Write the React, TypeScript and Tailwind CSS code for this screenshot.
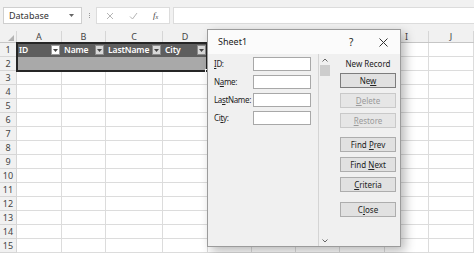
import React from "react";

const cols = [
  { name: "A", w: "w-[45px]" },
  { name: "B", w: "w-[44px]" },
  { name: "C", w: "w-[57px]" },
  { name: "D", w: "w-[45px]" },
  { name: "", w: "w-[44px]" },
  { name: "", w: "w-[44px]" },
  { name: "", w: "w-[44px]" },
  { name: "", w: "w-[45px]" },
  { name: "I", w: "w-[44px]" },
  { name: "J", w: "w-[45px]" },
];

const headers = ["ID", "Name", "LastName", "City"];

const FilterBtn = ({ active }: { active?: boolean }) => (
  <span
    className={`flex shrink-0 items-center justify-center w-[9px] h-[10px] border ${
      active ? "bg-white border-[#9a9a9a]" : "bg-[#d9d9d9] border-[#8c8c8c]"
    }`}
  >
    <svg width="5" height="3" viewBox="0 0 5 3">
      <path d="M0 0h5L2.5 3z" fill="#444" />
    </svg>
  </span>
);

// label with one underlined letter (access key)
const Key = ({ pre, k, post }: { pre: string; k: string; post: string }) => (
  <span className="whitespace-pre">
    {pre}
    <span className="underline underline-offset-1">{k}</span>
    {post}
  </span>
);

const DlgButton = ({
  children,
  disabled,
  main,
}: {
  children: React.ReactNode;
  disabled?: boolean;
  main?: boolean;
}) => (
  <div
    className={`flex items-center justify-center h-[15px] w-[56px] border text-[8px] ${
      disabled
        ? "bg-[#e6e6e6] border-[#c9c9c9] text-[#9a9a9a]"
        : main
        ? "bg-[#e1e1e1] border-[#7d7d7d] text-[#222]"
        : "bg-[#e1e1e1] border-[#adadad] text-[#222]"
    }`}
  >
    {children}
  </div>
);

const Field = ({ label }: { label: React.ReactNode }) => (
  <div className="flex items-center h-[14px]">
    <span className="w-[39px] shrink-0 whitespace-nowrap text-[8px] tracking-[-0.35px] text-[#222]">{label}</span>
    <div className="w-[58px] h-[14px] bg-white border border-[#a8a8a8]" />
  </div>
);

export default function App() {
  return (
    <div className="relative w-[474px] h-[253px] overflow-hidden bg-white font-['Noto_Sans',sans-serif] select-none">
      {/* name box + formula bar */}
      <div className="flex items-start h-[31px] bg-[#f1f1f1] pt-[7px] pl-[3px]">
        <div className="flex items-center justify-between w-[79px] h-[17px] bg-white border border-[#cfcfcf] pl-[5px] pr-[7px] text-[9px] text-[#333]">
          <span>Database</span>
          <svg width="5" height="3" viewBox="0 0 5 3">
            <path d="M0 0h5L2.5 3z" fill="#666" />
          </svg>
        </div>
        <div className="flex flex-col items-center justify-center gap-[1px] w-[14px] h-[17px]">
          <span className="w-[1px] h-[1px] bg-[#999]" />
          <span className="w-[1px] h-[1px] bg-[#999]" />
          <span className="w-[1px] h-[1px] bg-[#999]" />
        </div>
        <div className="flex items-center w-[74px] h-[17px] bg-white border border-[#dcdcdc] pl-[8px]">
          <svg width="8" height="8" viewBox="0 0 8 8" className="ml-[1px]">
            <path d="M1 1l6 6M7 1L1 7" stroke="#b5b5b5" strokeWidth="1" />
          </svg>
          <svg width="9" height="8" viewBox="0 0 9 8" className="ml-[15px]">
            <path d="M1 4.5l2.5 2.5L8 1" stroke="#b5b5b5" strokeWidth="1" fill="none" />
          </svg>
          <span className="ml-[15px] text-[9px] italic font-['Liberation_Serif',serif] text-[#444]">
            f<sub className="text-[6px]">x</sub>
          </span>
        </div>
        <div className="flex-1 h-[17px] ml-[3px] bg-white border-y border-l border-[#dcdcdc]" />
      </div>

      {/* sheet grid */}
      <div className="flex flex-col">
        <div className="flex h-[12px] bg-[#f1f1f1] border-b border-[#c6c6c6]">
          <div className="relative w-[17px] border-r border-[#d6d6d6]">
            <svg width="6" height="6" viewBox="0 0 6 6" className="absolute right-[2px] bottom-[1px]">
              <path d="M6 0v6H0z" fill="#b3b3b3" />
            </svg>
          </div>
          {cols.map((c, ci) => (
            <div
              key={ci}
              className={`${c.w} shrink-0 flex items-center justify-center border-r border-[#d6d6d6] text-[9px] text-[#444]`}
            >
              {c.name}
            </div>
          ))}
        </div>
        {Array.from({ length: 15 }, (_, i) => i + 1).map((r) => (
          <div key={r} className="flex h-[14px]">
            <div className="w-[17px] shrink-0 flex items-center justify-center bg-[#f1f1f1] border-r border-b border-[#d6d6d6] text-[9px] text-[#444]">
              {r}
            </div>
            {cols.map((c, ci) => {
              if (r === 1 && ci < 4)
                return (
                  <div
                    key={ci}
                    className={`${c.w} shrink-0 flex items-center justify-between bg-[#5e5e5e] pl-[2px] pr-[2px] text-[8.5px] font-semibold text-white overflow-hidden`}
                  >
                    <span className="whitespace-nowrap tracking-[-0.1px]">{headers[ci]}</span>
                    <FilterBtn active={ci === 0} />
                  </div>
                );
              if (r === 2 && ci < 4)
                return <div key={ci} className={`${c.w} shrink-0 bg-[#a9a9a9]`} />;
              return (
                <div
                  key={ci}
                  className={`${c.w} shrink-0 border-r border-b border-[#dcdcdc]`}
                />
              );
            })}
          </div>
        ))}
      </div>

      {/* selection outline */}
      <div className="absolute left-[16px] top-[42px] w-[192px] h-[30px] border-2 border-[#262626]" />
      <div className="absolute left-[205px] top-[69px] w-[4px] h-[4px] bg-[#262626] border border-white" />

      {/* data form dialog */}
      <div className="absolute left-[207px] top-[29px] w-[194px] h-[218px] flex flex-col bg-[#f0f0f0] border border-[#9b9b9b] shadow-[4px_4px_10px_rgba(0,0,0,0.28)]">
        <div className="flex items-center h-[24px] bg-[#fbfbfb] pl-[10px] text-[9px] text-[#222]">
          <span className="flex-1">Sheet1</span>
          <span className="w-[30px] text-[10px]">?</span>
          <svg width="9" height="9" viewBox="0 0 9 9" className="mr-[12px]">
            <path d="M0.5 0.5l8 8M8.5 0.5l-8 8" stroke="#333" strokeWidth="1" />
          </svg>
        </div>
        <div className="flex flex-1">
          <div className="flex flex-col gap-[4px] w-[110px] pl-[6px] pt-[3px]">
            <Field label={<Key pre="" k="I" post="D:" />} />
            <Field label={<Key pre="N" k="a" post="me:" />} />
            <Field label={<Key pre="La" k="s" post="tName:" />} />
            <Field label={<Key pre="Ci" k="t" post="y:" />} />
          </div>
          <div className="flex flex-col items-center w-[12px] border-l border-[#d4d4d4] pt-[4px] pb-[3px]">
            <svg width="6" height="4" viewBox="0 0 6 4">
              <path d="M0.5 3.5L3 1l2.5 2.5" stroke="#666" fill="none" />
            </svg>
            <div className="w-[10px] h-[11px] bg-[#cdcdcd] mt-[3px]" />
            <div className="flex-1" />
            <svg width="6" height="4" viewBox="0 0 6 4">
              <path d="M0.5 0.5L3 3l2.5-2.5" stroke="#666" fill="none" />
            </svg>
          </div>
          <div className="flex flex-col items-center pl-[10px] pt-[2px]">
            <div className="h-[15px] flex items-center text-[8px] text-[#222]">New Record</div>
            <div className="flex flex-col gap-[5px] mt-[2px]">
              <DlgButton main>
                <Key pre="Ne" k="w" post="" />
              </DlgButton>
              <DlgButton disabled>
                <Key pre="" k="D" post="elete" />
              </DlgButton>
              <DlgButton disabled>
                <Key pre="" k="R" post="estore" />
              </DlgButton>
            </div>
            <div className="flex flex-col gap-[5px] mt-[9px]">
              <DlgButton>
                <Key pre="Find " k="P" post="rev" />
              </DlgButton>
              <DlgButton>
                <Key pre="Find " k="N" post="ext" />
              </DlgButton>
              <DlgButton>
                <Key pre="" k="C" post="riteria" />
              </DlgButton>
            </div>
            <div className="mt-[10px]">
              <DlgButton>
                <Key pre="C" k="l" post="ose" />
              </DlgButton>
            </div>
          </div>
        </div>
      </div>
    </div>
  );
}
